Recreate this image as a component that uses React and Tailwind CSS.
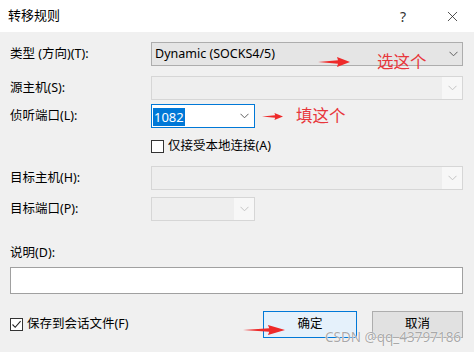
import { X } from "lucide-react";

const font = { fontFamily: '"Noto Sans", "Noto Sans CJK SC", sans-serif' };

function Chevron({ color = "#606060" }) {
  return (
    <svg width="9" height="6" viewBox="0 0 9 6">
      <path d="M0.5 0.8 L4.5 4.8 L8.5 0.8" fill="none" stroke={color} strokeWidth="1" />
    </svg>
  );
}

function RedArrow({ w, h }) {
  return (
    <svg width={w} height={h} viewBox="0 0 32 10" preserveAspectRatio="none">
      <polygon points="0,5 20,3.2 19,0 32,5 19,10 20,6.8" fill="#ee2a2a" />
    </svg>
  );
}

function Label({ children }) {
  return <div className="w-[151px] shrink-0 pl-[10px] text-[12.5px] text-black">{children}</div>;
}

function DisabledCombo({ wide }) {
  return (
    <div
      className={`flex h-[24px] items-stretch border border-[#d6d6d6] bg-[#f7f7f7] ${
        wide ? "w-[312px]" : "w-[104px]"
      }`}
    >
      <div className="flex-1 bg-[#eeeeee]" />
      <div className="flex w-[20px] items-center justify-center">
        <Chevron color="#c4c4c4" />
      </div>
    </div>
  );
}

export default function App() {
  return (
    <div className="relative h-[352px] w-[474px] overflow-hidden bg-[#f0f0f0]" style={font}>
      <div className="flex h-[32px] items-center bg-white pl-[8px] pr-[13px] text-[13px] text-black">
        <span className="flex-1">转移规则</span>
        <span className="mr-[38px] text-[14px] text-[#333]">?</span>
        <X size={17} strokeWidth={1.1} color="#222" />
      </div>

      <div className="flex flex-col">
        <div className="mt-[10px] flex h-[24px] items-center">
          <Label>类型 (方向)(T):</Label>
          <div className="flex h-[24px] w-[312px] items-center border border-[#adadad] bg-[#e5e5e5] pl-[3px] pr-[4px]">
            <span className="flex-1 text-[12.5px] text-black">Dynamic (SOCKS4/5)</span>
            <Chevron />
          </div>
        </div>

        <div className="mt-[10px] flex h-[24px] items-center">
          <Label>源主机(S):</Label>
          <DisabledCombo wide />
        </div>

        <div className="mt-[4px] flex h-[24px] items-center">
          <Label>侦听端口(L):</Label>
          <div className="flex h-[24px] w-[104px] items-center border border-[#0078d7] bg-white pl-[1px] pr-[5px]">
            <span className="flex-1">
              <span className="bg-[#0078d7] px-[1px] text-[13px] text-white">1082</span>
            </span>
            <Chevron />
          </div>
          <div className="ml-[7px] flex items-center">
            <RedArrow w={21} h={7} />
            <span className="ml-[13px] text-[16.5px] text-[#e8363b]">填这个</span>
          </div>
        </div>

        <div className="mt-[11px] flex h-[14px] items-center pl-[151px]">
          <div className="h-[13px] w-[13px] border border-[#333] bg-white" />
          <span className="ml-[4px] text-[12.5px] text-black">仅接受本地连接(A)</span>
        </div>

        <div className="mt-[13px] flex h-[24px] items-center">
          <Label>目标主机(H):</Label>
          <DisabledCombo wide />
        </div>

        <div className="mt-[7px] flex h-[24px] items-center">
          <Label>目标端口(P):</Label>
          <DisabledCombo />
        </div>

        <div className="mt-[22px] pl-[10px] text-[12.5px] leading-[20px] text-black">说明(D):</div>

        <div className="ml-[10px] mt-[4px] h-[27px] w-[453px] border border-[#a0a0a0] bg-white" />

        <div className="mt-[17px] flex h-[27px] items-center">
          <div className="ml-[10px] flex h-[13px] w-[13px] items-center justify-center border border-[#333] bg-white">
            <svg width="11" height="11" viewBox="0 0 11 11">
              <path d="M1.5 5.5 L4.2 8.3 L9.6 2.2" fill="none" stroke="#222" strokeWidth="1.1" />
            </svg>
          </div>
          <span className="ml-[4px] w-[236px] text-[12.5px] text-black">保存到会话文件(F)</span>
          <div className="flex h-[27px] w-[94px] items-center justify-center border border-[#0078d7] bg-[#e5f1fb] text-[12.5px] text-black">
            确定
          </div>
          <div className="ml-[15px] flex h-[27px] w-[91px] items-center justify-center border border-[#adadad] bg-[#e1e1e1] text-[12.5px] text-black">
            取消
          </div>
        </div>
      </div>

      <div className="absolute left-[318px] top-[50px] flex items-center">
        <RedArrow w={32} h={10} />
        <span className="ml-[27px] text-[16.5px] text-[#e8363b]">选这个</span>
      </div>

      <div className="absolute left-[243px] top-[325px]">
        <RedArrow w={42} h={10} />
      </div>

      <div
        className="absolute left-[325px] top-[327px] whitespace-nowrap text-[13.5px] text-[rgba(140,140,140,0.75)]"
        style={{ textShadow: "0 0 1px #fff, 0 0 1px #fff" }}
      >
        CSDN @qq_43797186
      </div>
    </div>
  );
}
